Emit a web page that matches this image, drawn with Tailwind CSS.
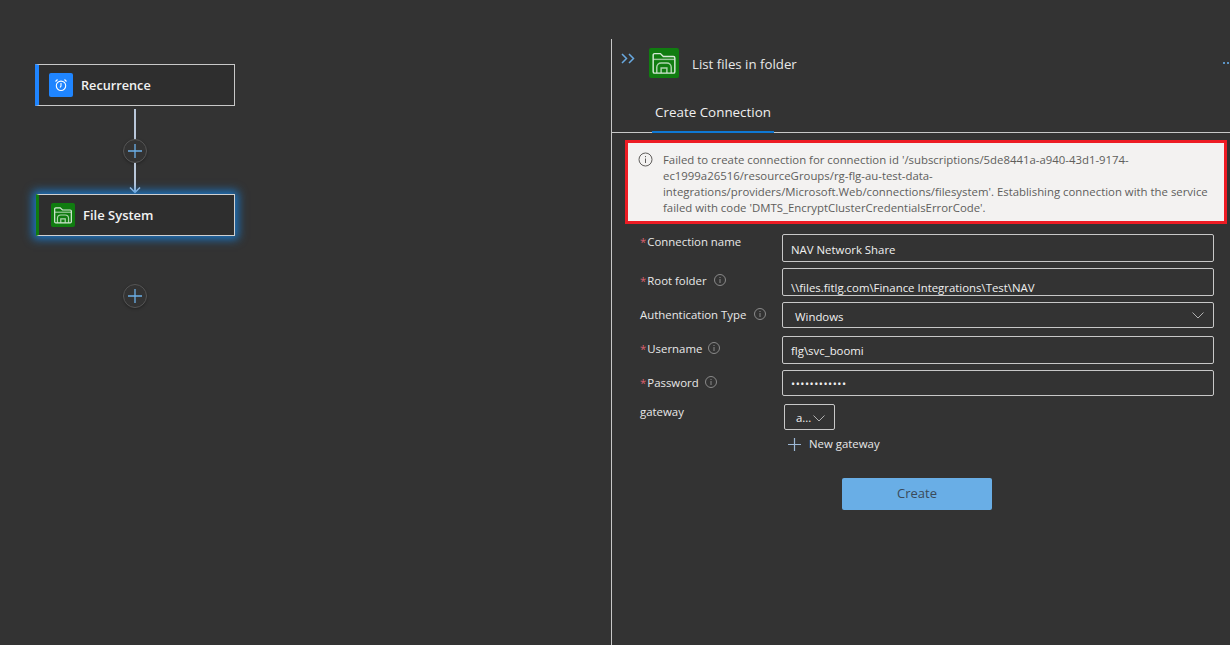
<!DOCTYPE html>
<html>
<head>
<meta charset="utf-8">
<script src="https://cdn.jsdelivr.net/npm/@tailwindcss/browser@4"></script>
</head>
<body class="m-0">
<div class="flex w-[1230px] h-[645px] overflow-hidden bg-[#333333] text-[#e8e8e8] font-['Open_Sans','Noto_Sans',sans-serif] text-[11.4px]">
  <!-- canvas -->
  <div class="relative w-[611px] shrink-0">
    <div class="absolute left-[35px] top-[64px] w-[200px] h-[42px] bg-[#2e2e2e] border border-[#c8c8c8] border-l-4 border-l-[#1f85ff] flex items-center pl-[10px]">
      <div class="w-6 h-6 rounded-[2px] bg-[#1f85ff] flex items-center justify-center">
        <svg width="14" height="14" viewBox="0 0 14 14" fill="none" stroke="white" stroke-width="1.100"><circle cx="7" cy="7.800" r="4.700"/><path d="M7 5v3L6 9.500M1.500 3.500 3.500 1.500M12.500 3.500 10.500 1.500"/></svg>
      </div>
      <span class="ml-2 pt-[1px] text-[12.700px] font-semibold text-[#f2f2f2]">Recurrence</span>
    </div>
    <div class="absolute left-[134px] top-[109px] w-[2px] h-[32px] bg-[#b9c7da]"></div>
    <div class="absolute left-[123px] top-[139px] w-6 h-6 rounded-full bg-[#333333] border border-[#555555] shadow-[0_1px_3px_rgba(0,0,0,0.3)] flex items-center justify-center">
      <svg width="16" height="16" viewBox="0 0 16 16" stroke="#6cb0e8" stroke-width="1.300"><path d="M8 1v14M1 8h14"/></svg>
    </div>
    <div class="absolute left-[134px] top-[163px] w-[2px] h-[29px] bg-[#b9c7da]"></div>
    <svg class="absolute left-[129px] top-[186px]" width="12" height="8" viewBox="0 0 12 8" fill="none" stroke="#b9c7da" stroke-width="1.500"><path d="M1 1.500 6 6.500 11 1.500"/></svg>
    <div class="absolute left-[36px] top-[194px] w-[199px] h-[42px] bg-[#2e2e2e] border border-[#d0d0d0] border-l-[3px] border-l-[#107c10] shadow-[0_0_9px_3px_rgba(20,135,235,0.8)] flex items-center pl-3">
      <div class="w-6 h-6 rounded-[2px] bg-[#107c10] flex items-center justify-center">
        <svg width="20" height="20" viewBox="0 0 18 18" fill="none" stroke="#d5e8d5" stroke-width="1.100"><path d="M1.500 15V3.500a1 1 0 0 1 1-1h4l2 2h7a1 1 0 0 1 1 1V15a1 1 0 0 1-1 1h-13a1 1 0 0 1-1-1z"/><path d="M1.500 6.500h15" stroke-opacity=".7"/><path d="M4 16v-4a3 3 0 0 1 3-3h4a3 3 0 0 1 3 3v4M7 16v-3.500h4V16" stroke-opacity=".8"/></svg>
      </div>
      <span class="ml-2 pt-[1px] text-[13px] font-semibold text-[#f2f2f2]">File System</span>
    </div>
    <div class="absolute left-[123px] top-[284px] w-6 h-6 rounded-full bg-[#333333] border border-[#555555] shadow-[0_1px_3px_rgba(0,0,0,0.3)] flex items-center justify-center">
      <svg width="16" height="16" viewBox="0 0 16 16" stroke="#6cb0e8" stroke-width="1.300"><path d="M8 1v14M1 8h14"/></svg>
    </div>
  </div>
  <!-- panel -->
  <div class="mt-[39px] flex-1 border-l border-[#c8c8c8] flex flex-col min-w-0">
    <div class="relative h-[94px] border-b border-[#c8c8c8]">
      <div class="flex items-center h-[50px] pt-[1px]">
        <svg class="ml-[9px] self-start mt-[13px]" width="14" height="11" viewBox="0 0 14 11" fill="none" stroke="#69a9e0" stroke-width="1.500"><path d="M1 1l4.500 4.500L1 10M8 1l4.500 4.500L8 10"/></svg>
        <div class="ml-[14px] self-start mt-[8px] w-[30px] h-[30px] rounded-[2px] bg-[#107c10] flex items-center justify-center">
          <svg width="26" height="26" viewBox="0 0 18 18" fill="none" stroke="#d5e8d5" stroke-width="1"><path d="M1.500 15V3.500a1 1 0 0 1 1-1h4l2 2h7a1 1 0 0 1 1 1V15a1 1 0 0 1-1 1h-13a1 1 0 0 1-1-1z"/><path d="M1.500 6.500h15" stroke-opacity=".7"/><path d="M4 16v-4a3 3 0 0 1 3-3h4a3 3 0 0 1 3 3v4M7 16v-3.500h4V16" stroke-opacity=".8"/></svg>
        </div>
        <span class="ml-[13px] text-[13.250px] text-[#e8e8e8]">List files in folder</span>
      </div>
      <div class="absolute right-[1px] top-[23px] flex gap-[2px]"><i class="block w-[2px] h-[2px] bg-[#5b93c4]"></i><i class="block w-[2px] h-[2px] bg-[#5b93c4]"></i></div>
      <div class="absolute left-[40px] bottom-[-1px] w-[122px] h-[36px] pt-[3px] border-b-2 border-[#0f78d4] text-center text-[13.400px] leading-[24px] text-[#f0f0f0]">Create Connection</div>
    </div>
    <div class="mt-[7px] ml-[13px] w-[602px] h-[84px] border-[3px] border-[#ed1c24] bg-[#f3f2f1] text-[#605e5c] flex pt-[9px] pl-[10px] pr-[8px] text-[11.380px] leading-[16px]">
      <svg class="shrink-0" width="15" height="15" viewBox="0 0 15 15" fill="none" stroke="#605e5c"><circle cx="7.500" cy="7.500" r="6.500"/><path d="M7.500 6.500v4.500M7.500 4v1.200"/></svg>
      <p class="ml-[10px] whitespace-nowrap">Failed to create connection for connection id '/subscriptions/5de8441a-a940-43d1-9174-<br>ec1999a26516/resourceGroups/rg-flg-au-test-data-<br>integrations/providers/Microsoft.Web/connections/filesystem'. Establishing connection with the service<br>failed with code 'DMTS_EncryptClusterCredentialsErrorCode'.</p>
    </div>
    <form class="mt-[10px] pl-[28px] pr-[16px] flex flex-col">
      <div class="flex h-[28px]">
        <label class="w-[142px] shrink-0 leading-[16px]"><span class="text-[#d9606e] mr-[1px]">*</span>Connection name</label>
        <div class="flex-1 border border-[#c8c8c8] rounded-[2px] pl-2 pt-[4px] flex items-center text-[#f0f0f0]">NAV Network Share</div>
      </div>
      <div class="flex h-[28px] mt-[6px]">
        <label class="w-[142px] shrink-0 leading-[16px] flex items-start pt-[5px]"><span class="text-[#d9606e] mr-[1px]">*</span>Root folder <svg class="ml-[7px] mt-[1px]" width="12" height="12" viewBox="0 0 12 12" fill="none" stroke="#8a8a8a"><circle cx="6" cy="6" r="5.500"/><path d="M6 5v4M6 3v1"/></svg></label>
        <div class="flex-1 border border-[#c8c8c8] rounded-[2px] pl-2 pt-[11px] leading-[16px] overflow-hidden text-[#f0f0f0]">\\files.fitlg.com\Finance Integrations\Test\NAV</div>
      </div>
      <div class="flex h-[26px] mt-[6px]">
        <label class="w-[142px] shrink-0 leading-[16px] flex items-start pt-[5px]">Authentication Type <svg class="ml-[8px] mt-[1px]" width="12" height="12" viewBox="0 0 12 12" fill="none" stroke="#8a8a8a"><circle cx="6" cy="6" r="5.500"/><path d="M6 5v4M6 3v1"/></svg></label>
        <div class="flex-1 border border-[#c8c8c8] rounded-[2px] pl-3 pr-[9px] flex items-center justify-between text-[#f0f0f0]"><span class="pt-[3px]">Windows</span>
          <svg width="12" height="7" viewBox="0 0 12 7" fill="none" stroke="#b0b0b0"><path d="M.5.500 6 6 11.500.500"/></svg></div>
      </div>
      <div class="flex h-[28px] mt-[8px]">
        <label class="w-[142px] shrink-0 leading-[16px] flex items-start pt-[5px]"><span class="text-[#d9606e] mr-[1px]">*</span>Username <svg class="ml-[6px] mt-[1px]" width="12" height="12" viewBox="0 0 12 12" fill="none" stroke="#8a8a8a"><circle cx="6" cy="6" r="5.500"/><path d="M6 5v4M6 3v1"/></svg></label>
        <div class="flex-1 border border-[#c8c8c8] rounded-[2px] pl-2 pt-[2px] flex items-center text-[#f0f0f0]">flg\svc_boomi</div>
      </div>
      <div class="flex h-[26px] mt-[6px]">
        <label class="w-[142px] shrink-0 leading-[16px] flex items-start pt-[5px]"><span class="text-[#d9606e] mr-[1px]">*</span>Password <svg class="ml-[6px] mt-[1px]" width="12" height="12" viewBox="0 0 12 12" fill="none" stroke="#8a8a8a"><circle cx="6" cy="6" r="5.500"/><path d="M6 5v4M6 3v1"/></svg></label>
        <div class="flex-1 border border-[#c8c8c8] rounded-[2px] pl-2 pt-[3px] flex items-center text-[#f0f0f0] text-[11px] tracking-[0.500px]">••••••••••••</div>
      </div>
      <div class="flex mt-[8px]">
        <label class="w-[144px] shrink-0 leading-[16px]">gateway</label>
        <div class="flex flex-col">
          <div class="w-[51px] h-[26px] border border-[#c8c8c8] rounded-[2px] flex items-center pl-[11px] pt-[2px] gap-[2px] text-[#f0f0f0]">a...<svg width="12" height="7" viewBox="0 0 12 7" fill="none" stroke="#b0b0b0"><path d="M.5.500 6 6 11.500.500"/></svg></div>
          <div class="flex items-center mt-[6px] ml-[4px] h-[16px] text-[#e8e8e8]"><svg width="13" height="13" viewBox="0 0 13 13" stroke="#9db8d6" stroke-width="1.200"><path d="M6.500 0v13M0 6.500h13"/></svg><span class="ml-[8px]">New gateway</span></div>
        </div>
      </div>
      <div class="flex justify-center mt-[26px] pr-[16px]">
        <button type="button" class="ml-[-4px] w-[150px] h-[32px] rounded-[2px] bg-[#69aee6] text-[#3a4a5a] text-[13px]">Create</button>
      </div>
    </form>
  </div>
</div>
</body>
</html>
